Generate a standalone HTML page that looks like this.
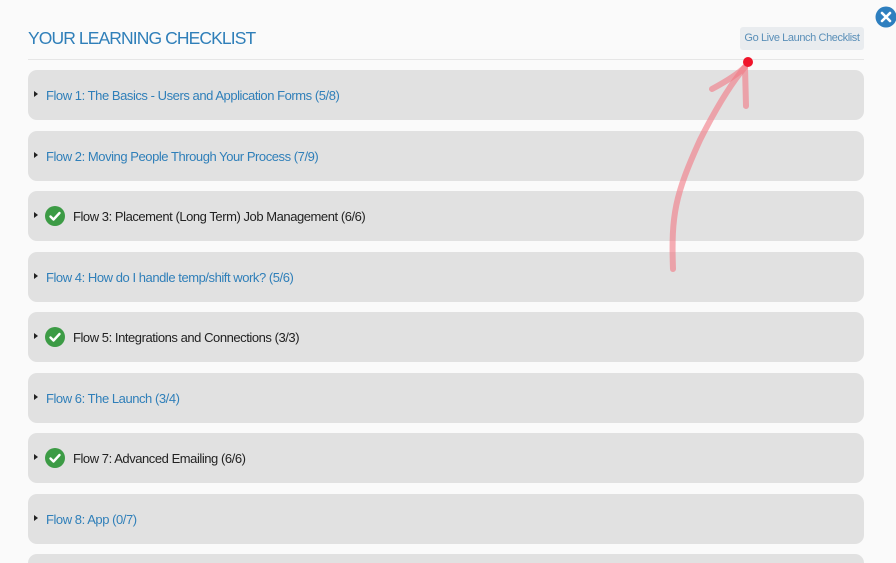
<!DOCTYPE html>
<html style="overflow:hidden;height:563px"><head><meta charset="utf-8"><style>
body{margin:0;width:896px;height:563px;overflow:hidden;background:#fafafa;font-family:"Liberation Sans",sans-serif;position:relative}
h1{position:absolute;left:28px;top:28px;margin:0;font-weight:normal;font-size:17.5px;color:#2f7fb9;letter-spacing:-0.9px;white-space:nowrap}
.hr{position:absolute;left:28px;top:59px;width:836px;height:1px;background:#e6e6e6}
.btn{position:absolute;left:740px;top:27px;width:124px;height:23px;background:#e9ecef;border-radius:3px;color:#5a8fb8;font-size:11px;line-height:23px;text-align:center;white-space:nowrap;letter-spacing:-0.4px}
.row{position:absolute;left:28px;width:836px;height:50px;background:#e1e1e1;border-radius:9px}
.row .tri{position:absolute;left:6px;top:21px;width:0;height:0;border-left:4px solid #222;border-top:3.5px solid transparent;border-bottom:3.5px solid transparent}
.row .t{position:absolute;left:18px;top:1px;line-height:50px;font-size:13px;color:#2f7fb9;letter-spacing:-0.45px;white-space:nowrap}
.row.done .t{left:45px;color:#222}
.chk{position:absolute;left:17px;top:15px;width:20px;height:20px;border-radius:50%;background:#3c9b45}
</style></head><body>
<h1>YOUR LEARNING CHECKLIST</h1>
<div class="btn">Go Live Launch Checklist</div>
<div class="hr"></div>

<div class="row" style="top:70px"><div class="tri"></div><div class="t">Flow 1: The Basics - Users and Application Forms (5/8)</div></div>
<div class="row" style="top:131px"><div class="tri"></div><div class="t">Flow 2: Moving People Through Your Process (7/9)</div></div>
<div class="row done" style="top:191px"><div class="tri"></div><div class="chk"><svg width="20" height="20"><path d="M5.5 10.5l3 3 6-6.5" stroke="#fff" stroke-width="2.4" fill="none" stroke-linecap="round" stroke-linejoin="round"/></svg></div><div class="t">Flow 3: Placement (Long Term) Job Management (6/6)</div></div>
<div class="row" style="top:252px"><div class="tri"></div><div class="t">Flow 4: How do I handle temp/shift work? (5/6)</div></div>
<div class="row done" style="top:312px"><div class="tri"></div><div class="chk"><svg width="20" height="20"><path d="M5.5 10.5l3 3 6-6.5" stroke="#fff" stroke-width="2.4" fill="none" stroke-linecap="round" stroke-linejoin="round"/></svg></div><div class="t">Flow 5: Integrations and Connections (3/3)</div></div>
<div class="row" style="top:373px"><div class="tri"></div><div class="t">Flow 6: The Launch (3/4)</div></div>
<div class="row done" style="top:433px"><div class="tri"></div><div class="chk"><svg width="20" height="20"><path d="M5.5 10.5l3 3 6-6.5" stroke="#fff" stroke-width="2.4" fill="none" stroke-linecap="round" stroke-linejoin="round"/></svg></div><div class="t">Flow 7: Advanced Emailing (6/6)</div></div>
<div class="row" style="top:494px"><div class="tri"></div><div class="t">Flow 8: App (0/7)</div></div>
<div class="row" style="top:554px;height:9px;border-radius:9px 9px 0 0"></div>

<svg style="position:absolute;left:0;top:0" width="896" height="563">
<g stroke="rgba(242,120,132,0.6)" stroke-width="6" fill="none" stroke-linecap="round" stroke-linejoin="round">
<path d="M673 269 C671 215 675 195 700 140 C715 110 730 85 745 67"/>
<path d="M712 89 C725 82 737 75 745 67 L746 106"/>
</g>
<circle cx="748" cy="62" r="5" fill="#f0142a"/>
<circle cx="886" cy="17" r="10.5" fill="#2e7fbf"/>
<path d="M882 13l8 8M890 13l-8 8" stroke="#fff" stroke-width="2.6" stroke-linecap="round"/>
</svg>
</body></html>
